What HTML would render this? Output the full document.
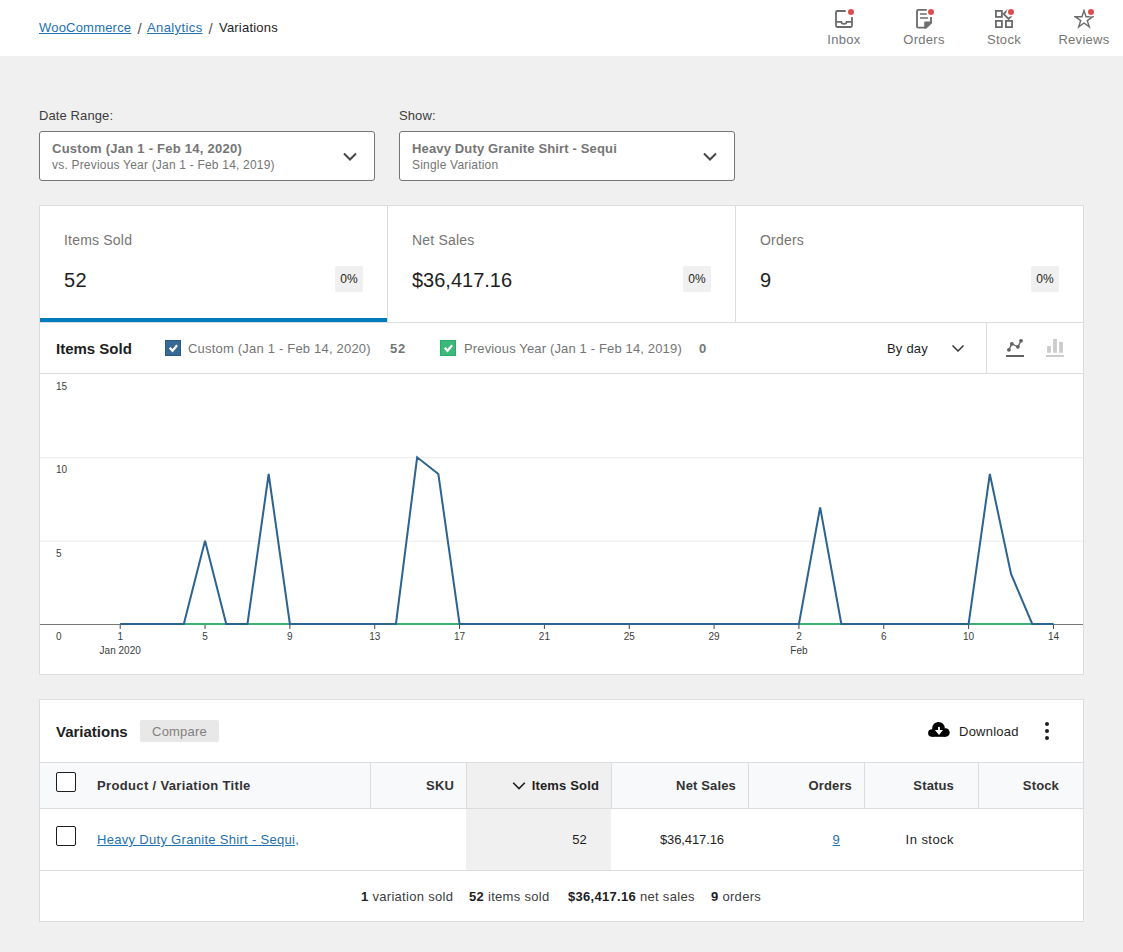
<!DOCTYPE html>
<html><head><meta charset="utf-8">
<style>
*{box-sizing:border-box;margin:0;padding:0}
html,body{width:1123px;height:952px;overflow:hidden;background:#f0f0f0;font-family:"Liberation Sans",sans-serif;color:#1e1e1e}
.a{position:absolute;white-space:nowrap}
#hdr{position:absolute;left:0;top:0;width:1123px;height:56px;background:#fff}
.crumb{font-size:13px;top:20px;line-height:16px;letter-spacing:0.2px}
.lnk{color:#2271b1;text-decoration:underline}
.act{font-size:13px;color:#757575;top:32px;line-height:16px;width:80px;text-align:center;letter-spacing:0.3px}
.dot{position:absolute;width:6px;height:6px;border-radius:50%;background:#d94f4f;box-shadow:0 0 0 1.5px #fff}
.lbl{font-size:13px;color:#3c3c3c;line-height:16px;letter-spacing:0.1px}
.sel{position:absolute;background:#fff;border:1px solid #757575;border-radius:3px;height:50px;width:336px;top:131px}
.sel .t1{position:absolute;left:12px;top:9px;font-size:13px;font-weight:bold;color:#757575;line-height:16px;letter-spacing:0.25px}
.sel .t2{position:absolute;left:12px;top:26px;font-size:12px;color:#757575;line-height:15px;letter-spacing:0.2px}
.panel{position:absolute;background:#fff;border:1px solid #dcdcde}
.card-l{font-size:14px;color:#757575;line-height:16px;letter-spacing:0.2px}
.card-v{font-size:20px;color:#1e1e1e;line-height:24px}
.badge{position:absolute;width:28px;height:26px;background:#f0f0f0;border-radius:2px;font-size:12px;color:#1e1e1e;text-align:center;line-height:26px}
.vl{position:absolute;width:1px;background:#dcdcde}
.hl{position:absolute;height:1px;background:#dcdcde}
.leg{font-size:13px;color:#757575;line-height:16px;top:341px}
.th{font-size:13px;font-weight:bold;color:#333;line-height:16px;top:778px;letter-spacing:0.15px}
.td{font-size:13px;color:#1e1e1e;line-height:16px;top:832px;letter-spacing:0.15px}
.ft{font-size:13px;color:#3c3c3c;line-height:16px;top:889px;letter-spacing:0.3px}
.ft b{color:#1e1e1e}
.cb{position:absolute;width:20px;height:20px;border:1px solid #1e1e1e;border-radius:2px;background:#fff}
</style></head><body>
<div id="hdr">
  <div class="a crumb lnk" style="left:39px">WooCommerce</div>
  <div class="a crumb" style="left:137.5px;top:21px;color:#555;font-size:15px">/</div>
  <div class="a crumb lnk" style="left:147px;letter-spacing:0.4px">Analytics</div>
  <div class="a crumb" style="left:208.5px;top:21px;color:#555;font-size:15px">/</div>
  <div class="a crumb" style="left:219px">Variations</div>
  <svg class="a" style="left:835px;top:10px" width="18" height="18" viewBox="0 0 18 18"><path d="M10.7 1H2.2Q1 1 1 2.2V15.8Q1 17 2.2 17H15.8Q17 17 17 15.8V7.1" fill="none" stroke="#6b6b6b" stroke-width="1.8"/><path d="M1 11.8H6.3A2.65 2.1 0 0 0 11.6 11.8H17" fill="none" stroke="#6b6b6b" stroke-width="1.8"/></svg>
  <div class="dot" style="left:848px;top:9px"></div>
  <div class="a act" style="left:804px">Inbox</div>
  <svg class="a" style="left:916px;top:9px" width="18" height="21" viewBox="0 0 18 21"><path d="M10.8 0.9H2.2Q1 0.9 1 2.1V17.5Q1 18.7 2.2 18.7H10L15 13.8V8" fill="none" stroke="#6b6b6b" stroke-width="1.8"/><path d="M4 5H10.75M4 9H12" stroke="#6b6b6b" stroke-width="1.7"/><path d="M8.2 19.5V13.6Q8.2 12.4 9.4 12.4H15.9V13.8L10 19.6Z" fill="#707070"/></svg>
  <div class="dot" style="left:928px;top:9px"></div>
  <div class="a act" style="left:884px">Orders</div>
  <svg class="a" style="left:994px;top:9px" width="20" height="20" viewBox="0 0 20 20"><rect x="1.9" y="1.9" width="6" height="6" fill="none" stroke="#6b6b6b" stroke-width="1.8"/><rect x="1.9" y="11.9" width="6" height="6.2" fill="none" stroke="#6b6b6b" stroke-width="1.8"/><rect x="11.9" y="11.9" width="6.2" height="6.2" fill="none" stroke="#6b6b6b" stroke-width="1.8"/><path d="M14.6 0L9.6 5L14.6 10L19.6 5Z" fill="none" stroke="#6b6b6b" stroke-width="1.8"/></svg>
  <div class="dot" style="left:1008px;top:9px"></div>
  <div class="a act" style="left:964px">Stock</div>
  <svg class="a" style="left:1074px;top:9px" width="20" height="20" viewBox="0 0 20 20"><path d="M10.00 1.50L12.04 7.77L18.63 7.77L13.30 11.64L15.33 17.91L10.00 14.03L4.67 17.91L6.70 11.64L1.37 7.77L7.96 7.77Z" fill="none" stroke="#6b6b6b" stroke-width="1.4" stroke-linejoin="miter"/></svg>
  <div class="dot" style="left:1088px;top:9px"></div>
  <div class="a act" style="left:1044px">Reviews</div>
</div>

<div class="a lbl" style="left:39px;top:108px">Date Range:</div>
<div class="sel" style="left:39px"><div class="t1">Custom (Jan 1 - Feb 14, 2020)</div><div class="t2">vs. Previous Year (Jan 1 - Feb 14, 2019)</div>
<svg style="position:absolute;left:303px;top:20px" width="14" height="10" viewBox="0 0 14 10"><path d="M1 1.5L7 7.5L13 1.5" fill="none" stroke="#444" stroke-width="2"/></svg></div>
<div class="a lbl" style="left:399px;top:108px">Show:</div>
<div class="sel" style="left:399px"><div class="t1" style="letter-spacing:0.15px">Heavy Duty Granite Shirt - Sequi</div><div class="t2">Single Variation</div>
<svg style="position:absolute;left:303px;top:20px" width="14" height="10" viewBox="0 0 14 10"><path d="M1 1.5L7 7.5L13 1.5" fill="none" stroke="#444" stroke-width="2"/></svg></div>

<div class="panel" style="left:39px;top:205px;width:1045px;height:470px"></div>
<div class="vl" style="left:387px;top:206px;height:116px"></div>
<div class="vl" style="left:735px;top:206px;height:116px"></div>
<div class="a" style="left:40px;top:318px;width:347px;height:4px;background:#007cba"></div>
<div class="hl" style="left:40px;top:322px;width:1043px"></div>
<div class="a card-l" style="left:64px;top:232px">Items Sold</div>
<div class="a card-v" style="left:64px;top:268px;letter-spacing:0.5px">52</div>
<div class="badge" style="left:335px;top:266px">0%</div>
<div class="a card-l" style="left:412px;top:232px">Net Sales</div>
<div class="a card-v" style="left:412px;top:268px">$36,417.16</div>
<div class="badge" style="left:683px;top:266px">0%</div>
<div class="a card-l" style="left:760px;top:232px">Orders</div>
<div class="a card-v" style="left:760px;top:268px">9</div>
<div class="badge" style="left:1031px;top:266px">0%</div>

<div class="a" style="left:56px;top:340px;font-size:15px;font-weight:bold;line-height:18px;color:#1e1e1e">Items Sold</div>
<div class="a" style="left:165px;top:340px;width:16px;height:16px;background:#366894;border:1px solid #275c88"></div>
<svg class="a" style="left:165px;top:340px" width="16" height="16" viewBox="0 0 16 16"><path d="M4.7 7.8L7.5 10.8L12.1 5.2" fill="none" stroke="#fff" stroke-width="2.2"/></svg>
<div class="a leg" style="left:188px;letter-spacing:0.2px">Custom (Jan 1 - Feb 14, 2020)</div>
<div class="a leg" style="left:390px;font-weight:bold;letter-spacing:0.8px">52</div>
<div class="a" style="left:440px;top:340px;width:16px;height:16px;background:#3db87a;border:1px solid #2aac6a"></div>
<svg class="a" style="left:440px;top:340px" width="16" height="16" viewBox="0 0 16 16"><path d="M4.7 7.8L7.5 10.8L12.1 5.2" fill="none" stroke="#fff" stroke-width="2.2"/></svg>
<div class="a leg" style="left:464px;letter-spacing:0.15px">Previous Year (Jan 1 - Feb 14, 2019)</div>
<div class="a leg" style="left:699px;font-weight:bold">0</div>
<div class="a" style="left:887px;top:341px;font-size:13px;color:#1e1e1e;line-height:16px;letter-spacing:0.2px">By day</div>
<svg class="a" style="left:951px;top:344px" width="14" height="10" viewBox="0 0 14 10"><path d="M1.5 1.5L7 7L12.5 1.5" fill="none" stroke="#333" stroke-width="1.5"/></svg>
<div class="vl" style="left:986px;top:323px;height:50px"></div>
<svg class="a" style="left:1000px;top:333px" width="30" height="30" viewBox="1000 333 30 30"><path d="M1008.9 349.8L1011.85 343.9L1017.9 346.8L1021 340.8" fill="none" stroke="#606060" stroke-width="1.3"/><circle cx="1008.9" cy="349.8" r="1.9" fill="#606060"/><circle cx="1011.85" cy="343.9" r="1.9" fill="#606060"/><circle cx="1017.9" cy="346.8" r="1.9" fill="#606060"/><circle cx="1021" cy="340.8" r="1.9" fill="#606060"/><rect x="1006" y="355" width="18" height="2" fill="#606060"/></svg>
<svg class="a" style="left:1040px;top:333px" width="30" height="30" viewBox="1040 333 30 30"><rect x="1047.1" y="346.1" width="3.8" height="6.7" fill="#ccc"/><rect x="1053.1" y="339" width="3.8" height="13.8" fill="#ccc"/><rect x="1059.1" y="342" width="3.9" height="10.8" fill="#ccc"/><rect x="1046" y="355" width="18" height="2" fill="#ccc"/></svg>
<div class="hl" style="left:40px;top:373px;width:1043px"></div>

<svg class="a" style="left:40px;top:374px" width="1043" height="300" viewBox="40 374 1043 300"><line x1="40" x2="1083" y1="541.2" y2="541.2" stroke="#ebebeb" stroke-width="1"/><line x1="40" x2="1083" y1="457.8" y2="457.8" stroke="#ebebeb" stroke-width="1"/><line x1="40" x2="1083" y1="624.5" y2="624.5" stroke="#777" stroke-width="1"/><line x1="120.20" x2="120.20" y1="625" y2="629" stroke="#444" stroke-width="1"/><line x1="205.04" x2="205.04" y1="625" y2="629" stroke="#444" stroke-width="1"/><line x1="289.88" x2="289.88" y1="625" y2="629" stroke="#444" stroke-width="1"/><line x1="374.72" x2="374.72" y1="625" y2="629" stroke="#444" stroke-width="1"/><line x1="459.56" x2="459.56" y1="625" y2="629" stroke="#444" stroke-width="1"/><line x1="544.40" x2="544.40" y1="625" y2="629" stroke="#444" stroke-width="1"/><line x1="629.25" x2="629.25" y1="625" y2="629" stroke="#444" stroke-width="1"/><line x1="714.09" x2="714.09" y1="625" y2="629" stroke="#444" stroke-width="1"/><line x1="798.93" x2="798.93" y1="625" y2="629" stroke="#444" stroke-width="1"/><line x1="883.77" x2="883.77" y1="625" y2="629" stroke="#444" stroke-width="1"/><line x1="968.61" x2="968.61" y1="625" y2="629" stroke="#444" stroke-width="1"/><line x1="1053.45" x2="1053.45" y1="625" y2="629" stroke="#444" stroke-width="1"/><line x1="120.20" x2="1053.45" y1="624" y2="624" stroke="#3bb273" stroke-width="2"/><polyline points="120.20,624.00 141.41,624.00 162.62,624.00 183.83,624.00 205.04,540.67 226.25,624.00 247.46,624.00 268.67,474.00 289.88,624.00 311.09,624.00 332.30,624.00 353.51,624.00 374.72,624.00 395.93,624.00 417.14,457.33 438.35,474.00 459.56,624.00 480.77,624.00 501.98,624.00 523.19,624.00 544.40,624.00 565.61,624.00 586.83,624.00 608.04,624.00 629.25,624.00 650.46,624.00 671.67,624.00 692.88,624.00 714.09,624.00 735.30,624.00 756.51,624.00 777.72,624.00 798.93,624.00 820.14,507.33 841.35,624.00 862.56,624.00 883.77,624.00 904.98,624.00 926.19,624.00 947.40,624.00 968.61,624.00 989.82,474.00 1011.03,574.00 1032.24,624.00 1053.45,624.00" fill="none" stroke="#2c6390" stroke-width="2" stroke-linejoin="miter"/><text x="56" y="390" font-size="10" fill="#3c3c3c" font-family="Liberation Sans">15</text><text x="56" y="473" font-size="10" fill="#3c3c3c" font-family="Liberation Sans">10</text><text x="56" y="557" font-size="10" fill="#3c3c3c" font-family="Liberation Sans">5</text><text x="56" y="640" font-size="10" fill="#3c3c3c" font-family="Liberation Sans">0</text><text x="120.20" y="640" font-size="10" fill="#3c3c3c" text-anchor="middle" font-family="Liberation Sans">1</text><text x="205.04" y="640" font-size="10" fill="#3c3c3c" text-anchor="middle" font-family="Liberation Sans">5</text><text x="289.88" y="640" font-size="10" fill="#3c3c3c" text-anchor="middle" font-family="Liberation Sans">9</text><text x="374.72" y="640" font-size="10" fill="#3c3c3c" text-anchor="middle" font-family="Liberation Sans">13</text><text x="459.56" y="640" font-size="10" fill="#3c3c3c" text-anchor="middle" font-family="Liberation Sans">17</text><text x="544.40" y="640" font-size="10" fill="#3c3c3c" text-anchor="middle" font-family="Liberation Sans">21</text><text x="629.25" y="640" font-size="10" fill="#3c3c3c" text-anchor="middle" font-family="Liberation Sans">25</text><text x="714.09" y="640" font-size="10" fill="#3c3c3c" text-anchor="middle" font-family="Liberation Sans">29</text><text x="798.93" y="640" font-size="10" fill="#3c3c3c" text-anchor="middle" font-family="Liberation Sans">2</text><text x="883.77" y="640" font-size="10" fill="#3c3c3c" text-anchor="middle" font-family="Liberation Sans">6</text><text x="968.61" y="640" font-size="10" fill="#3c3c3c" text-anchor="middle" font-family="Liberation Sans">10</text><text x="1053.45" y="640" font-size="10" fill="#3c3c3c" text-anchor="middle" font-family="Liberation Sans">14</text><text x="120.20" y="654" font-size="10" fill="#3c3c3c" text-anchor="middle" font-family="Liberation Sans">Jan 2020</text><text x="798.93" y="654" font-size="10" fill="#3c3c3c" text-anchor="middle" font-family="Liberation Sans">Feb</text></svg>

<div class="panel" style="left:39px;top:699px;width:1045px;height:223px"></div>
<div class="a" style="left:56px;top:723px;font-size:15px;font-weight:bold;line-height:18px;color:#1e1e1e">Variations</div>
<div class="a" style="left:140px;top:720px;width:79px;height:22px;background:#e8e8e8;border-radius:2px;font-size:13px;color:#808080;text-align:center;line-height:24px;letter-spacing:0.2px">Compare</div>
<svg class="a" style="left:927px;top:720px" width="24" height="20" viewBox="0 0 24 20"><circle cx="11.5" cy="8.3" r="6.3" fill="#000"/><circle cx="18.4" cy="12.5" r="4.3" fill="#000"/><circle cx="4.9" cy="13" r="3.8" fill="#000"/><rect x="4.9" y="10" width="13.5" height="6.8" fill="#000"/><rect x="11.1" y="6.9" width="1.8" height="4" fill="#fff"/><path d="M7.9 10.1H16L12 14.9Z" fill="#fff"/></svg>
<div class="a" style="left:959px;top:724px;font-size:13px;color:#1e1e1e;line-height:16px;letter-spacing:0.25px">Download</div>
<div class="a" style="left:1045px;top:722px;width:4px;height:4px;border-radius:50%;background:#1e1e1e"></div>
<div class="a" style="left:1045px;top:729px;width:4px;height:4px;border-radius:50%;background:#1e1e1e"></div>
<div class="a" style="left:1045px;top:736px;width:4px;height:4px;border-radius:50%;background:#1e1e1e"></div>
<div class="hl" style="left:40px;top:762px;width:1043px"></div>
<div class="a" style="left:40px;top:763px;width:1043px;height:45px;background:#f8f9fa"></div>
<div class="a" style="left:466px;top:763px;width:145px;height:107px;background:#f0f0f0"></div>
<div class="vl" style="left:370px;top:763px;height:45px"></div>
<div class="vl" style="left:466px;top:763px;height:45px"></div>
<div class="vl" style="left:611px;top:763px;height:45px"></div>
<div class="vl" style="left:748px;top:763px;height:45px"></div>
<div class="vl" style="left:864px;top:763px;height:45px"></div>
<div class="vl" style="left:978px;top:763px;height:45px"></div>
<div class="hl" style="left:40px;top:808px;width:1043px"></div>
<div class="cb" style="left:56px;top:772px"></div>
<div class="a th" style="left:97px;letter-spacing:0.35px">Product / Variation Title</div>
<div class="a th" style="right:669px">SKU</div>
<svg class="a" style="left:512px;top:780px" width="14" height="12" viewBox="0 0 14 12"><path d="M1.2 2.8L7 8.6L12.8 2.8" fill="none" stroke="#1e1e1e" stroke-width="1.6"/></svg>
<div class="a th" style="right:524px;color:#1e1e1e">Items Sold</div>
<div class="a th" style="right:387px">Net Sales</div>
<div class="a th" style="right:271px">Orders</div>
<div class="a th" style="right:169px">Status</div>
<div class="a th" style="right:64px">Stock</div>
<div class="cb" style="left:56px;top:826px"></div>
<div class="a td lnk" style="left:97px;color:#2271b1;letter-spacing:0.3px">Heavy Duty Granite Shirt - Sequi,</div>
<div class="a td" style="right:536px">52</div>
<div class="a td" style="right:399px;letter-spacing:-0.1px">$36,417.16</div>
<div class="a td lnk" style="right:283px;color:#2271b1">9</div>
<div class="a td" style="right:169px;letter-spacing:0.45px">In stock</div>
<div class="hl" style="left:40px;top:870px;width:1043px"></div>
<div class="a ft" style="left:361px"><b>1</b> variation sold</div>
<div class="a ft" style="left:469px"><b>52</b> items sold</div>
<div class="a ft" style="left:568px"><b>$36,417.16</b> net sales</div>
<div class="a ft" style="left:711px"><b>9</b> orders</div>
</body></html>
